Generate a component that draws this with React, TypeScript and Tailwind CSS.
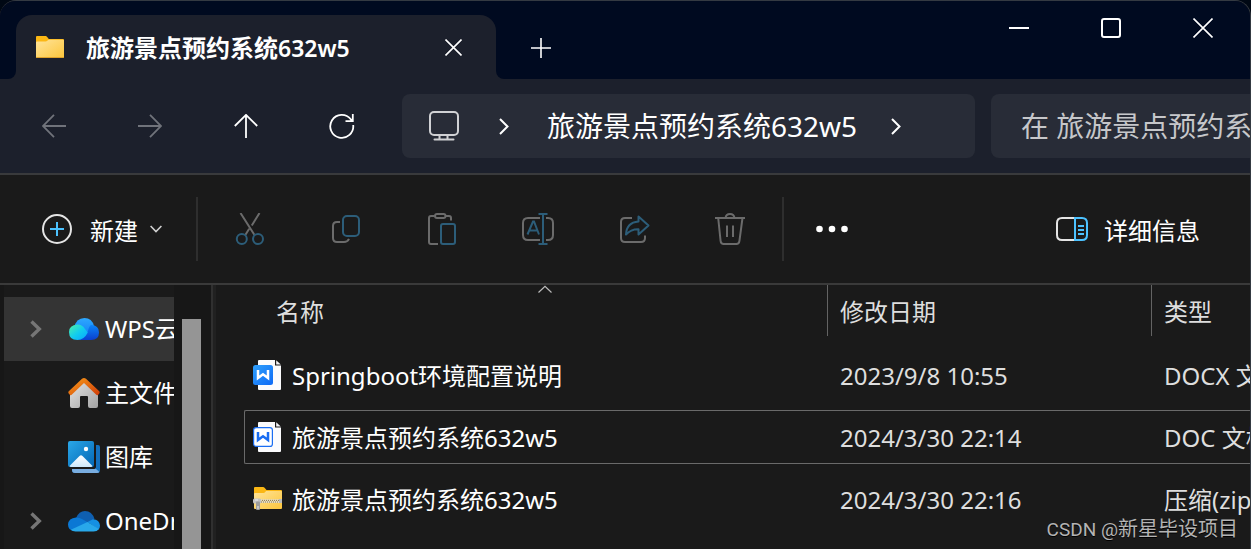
import type { ReactNode } from 'react';

type IconProps = { className?: string };

function FolderIcon() {
  return (
    <svg width="28" height="22" viewBox="0 0 28 22" aria-hidden="true">
      <defs>
        <linearGradient id="folder" x1="0" y1="0" x2="1" y2="1">
          <stop offset="0" stopColor="#ffe49a" />
          <stop offset="1" stopColor="#fcc63c" />
        </linearGradient>
      </defs>
      <path d="M0 1Q0 0 1 0H9.500Q10.500 0 11.200 .9L12.800 3H27Q28 3 28 4V12H0Z" fill="#fbb714" />
      <path d="M0 6.500Q0 5.500 1 5.500H9.500Q10.600 5.500 11.400 4.700L12 4Q12.500 3.700 13.200 3.700H27Q28 3.700 28 4.700V21Q28 22 27 22H1Q0 22 0 21Z" fill="url(#folder)" />
      <path d="M0 21H28Q28 22 27 22H1Q0 22 0 21Z" fill="#dfa22b" />
    </svg>
  );
}

function Cross({ size, stroke }: { size: number; stroke: number }) {
  return (
    <svg width={size} height={size} viewBox={`0 0 ${size} ${size}`} fill="none" stroke="#fff" strokeWidth={stroke} aria-hidden="true">
      <path d={`M.5 .5L${size - 0.5} ${size - 0.5}M${size - 0.5} .5L.5 ${size - 0.5}`} />
    </svg>
  );
}

function ArrowIcon({ className }: IconProps) {
  return (
    <svg width="24" height="24" viewBox="0 0 24 24" fill="none" strokeWidth="1.800" stroke="currentColor" className={className} aria-hidden="true">
      <path d="M12 .8L.9 12L12 23.200M.9 12H24" />
    </svg>
  );
}

function RefreshIcon() {
  return (
    <svg width="26" height="26" viewBox="0 0 26 26" fill="none" stroke="#fff" strokeWidth="1.800" aria-hidden="true">
      <path d="M24.200 12A11.500 11.500 0 1 1 21.800 6.200L23 7.900M23.800 1V8.100H16.500" />
    </svg>
  );
}

function ChevronRight({ className }: IconProps) {
  return (
    <svg width="10" height="17" viewBox="0 0 10 17" fill="none" stroke="#fff" strokeWidth="2" className={className} aria-hidden="true">
      <path d="M1 1L8.500 8.500L1 16" />
    </svg>
  );
}

function TreeChevron({ className }: IconProps) {
  return (
    <svg width="12" height="18" viewBox="0 0 12 18" fill="none" stroke="currentColor" strokeWidth="3.400" className={className} aria-hidden="true">
      <path d="M1.500 1.500L9.300 9L1.500 16.500" />
    </svg>
  );
}

function MonitorIcon() {
  return (
    <svg width="30" height="30" viewBox="0 0 30 30" fill="none" stroke="#d0d1d4" strokeWidth="2" aria-hidden="true">
      <rect x="1" y="1" width="28" height="23" rx="4" />
      <path d="M10.500 24V28M18.500 24V28" />
      <path d="M5.500 28.600H24.500" strokeLinecap="round" />
    </svg>
  );
}

function NewIcon() {
  return (
    <svg width="30" height="30" viewBox="0 0 30 30" fill="none" strokeWidth="2" aria-hidden="true">
      <circle cx="15" cy="15" r="14" stroke="#e4e4e4" />
      <path d="M15 8V22M8 15H22" stroke="#4cc2ff" />
    </svg>
  );
}

function CutIcon() {
  return (
    <svg width="32" height="32" viewBox="0 0 32 32" fill="none" strokeWidth="2" aria-hidden="true">
      <path d="M6.500 0L20.500 22M25.500 0L17.800 12.500M15.200 15.800L11.300 22" stroke="#6b6b6b" />
      <circle cx="7.800" cy="26" r="5" stroke="#2c5d79" />
      <circle cx="24" cy="26" r="5" stroke="#2c5d79" />
    </svg>
  );
}

function CopyIcon() {
  return (
    <svg width="32" height="32" viewBox="0 0 32 32" fill="none" strokeWidth="2" aria-hidden="true">
      <path d="M10 9H7Q3 9 3 13V25Q3 29 7 29H14Q17.500 29 19 25.800" stroke="#6b6b6b" />
      <rect x="13" y="3" width="16" height="20" rx="4" stroke="#2c5d79" />
    </svg>
  );
}

function PasteIcon() {
  return (
    <svg width="32" height="32" viewBox="0 0 32 32" fill="none" strokeWidth="2" aria-hidden="true">
      <path d="M8.800 3H5Q3 3 3 5V29Q3 31 5 31H12M20 3H23Q25 3 25 5V7.500" stroke="#6b6b6b" />
      <rect x="9" y="1" width="10.500" height="4" rx="2" stroke="#6b6b6b" />
      <rect x="15" y="11" width="14" height="20" rx="2" stroke="#2c5d79" />
    </svg>
  );
}

function RenameIcon() {
  return (
    <svg width="32" height="32" viewBox="0 0 32 32" fill="none" strokeWidth="2" aria-hidden="true">
      <path d="M18 5H6Q1 5 1 10V22Q1 27 6 27H18M24 5H26Q31 5 31 10V22Q31 27 26 27H24" stroke="#6b6b6b" />
      <path d="M5.500 21.500L11 8.500H12L17 21.500M7.300 17.500H15.500M21 1V31M16.500 1H25.500M16.500 31H25.500" stroke="#2c5d79" />
    </svg>
  );
}

function ShareIcon() {
  return (
    <svg width="32" height="32" viewBox="0 0 32 32" fill="none" strokeWidth="2" aria-hidden="true">
      <path d="M14 5H7Q3 5 3 9V25Q3 29 7 29H23Q27 29 27 25V22.500" stroke="#6b6b6b" />
      <path d="M20.500 3.500L30.500 12.500L20.500 21.500V16.200Q13 16 8 21.500Q8.500 9.500 20.500 8.500Z" stroke="#2c5d79" strokeLinejoin="round" />
    </svg>
  );
}

function DeleteIcon() {
  return (
    <svg width="32" height="32" viewBox="0 0 32 32" fill="none" stroke="#6b6b6b" strokeWidth="2" aria-hidden="true">
      <path d="M1 5H31M11.500 5Q12 1 16 1T20.500 5M4.200 5L6.600 28Q6.900 31 9.700 31H22.300Q25.100 31 25.400 28L28.500 5M13 12.500V24M19 12.500V24" />
    </svg>
  );
}

function MoreIcon() {
  return (
    <svg width="32" height="8" viewBox="0 0 32 8" fill="#fff" aria-hidden="true">
      <circle cx="3.500" cy="4" r="3.300" />
      <circle cx="16" cy="4" r="3.300" />
      <circle cx="28.500" cy="4" r="3.300" />
    </svg>
  );
}

function DetailsIcon() {
  return (
    <svg width="32" height="24" viewBox="0 0 32 24" fill="none" strokeWidth="2" aria-hidden="true">
      <path d="M18 1H6Q1 1 1 6V18Q1 23 6 23H18" stroke="#e4e4e4" />
      <path d="M19 1H26Q31 1 31 6V18Q31 23 26 23H19ZM22 9H28M22 13H28M22 17H28" stroke="#4cc2ff" />
    </svg>
  );
}

function WpsCloudIcon() {
  return (
    <svg width="32" height="32" viewBox="0 0 32 32" aria-hidden="true">
      <defs>
        <linearGradient id="wpsTop" x1="0" y1="0" x2="0" y2="1">
          <stop offset="0" stopColor="#2ea8ff" />
          <stop offset="1" stopColor="#1180f5" />
        </linearGradient>
        <linearGradient id="wpsRight" x1="0" y1="0" x2="0" y2="1">
          <stop offset="0" stopColor="#0b84f8" />
          <stop offset="1" stopColor="#0a3fd0" />
        </linearGradient>
        <linearGradient id="wpsLeft" x1="0" y1="0" x2="1" y2="1">
          <stop offset="0" stopColor="#4ff0a4" />
          <stop offset=".5" stopColor="#12cdee" />
          <stop offset="1" stopColor="#08a4ff" />
        </linearGradient>
      </defs>
      <path d="M6 15Q8 5 16.500 5Q24 5 26 13L20 23H10Z" fill="url(#wpsTop)" />
      <path d="M23 12Q31 12 31 19.500Q31 27 23 27H9Q16 26 20 18Q21 13 23 12Z" fill="url(#wpsRight)" />
      <path d="M9.500 11.500Q14.500 11.500 17 16L19.800 19.500Q16 27 9.500 27Q1 27 1 19Q1 12 9.500 11.500Z" fill="url(#wpsLeft)" />
    </svg>
  );
}

function HomeIcon() {
  return (
    <svg width="32" height="32" viewBox="0 0 32 32" aria-hidden="true">
      <defs>
        <linearGradient id="homeWall" x1="0" y1="0" x2="1" y2="1">
          <stop offset="0" stopColor="#e6e6e6" />
          <stop offset="1" stopColor="#a2a2a2" />
        </linearGradient>
        <linearGradient id="homeRoof" x1="0" y1="0" x2="1" y2="1">
          <stop offset="0" stopColor="#f9a01b" />
          <stop offset="1" stopColor="#cf3b08" />
        </linearGradient>
      </defs>
      <path d="M2 14L16 3L30 14V29Q30 31 28 31H22Q20 31 20 29V20Q20 19 19 19H13Q12 19 12 20V29Q12 31 10 31H4Q2 31 2 29Z" fill="url(#homeWall)" />
      <path d="M14 1.800Q16 0 18 1.800L31.500 14.500Q32 15.500 31.300 16.500L30 18Q29 18.500 28.300 17.800L16 6L3.700 17.800Q3 18.500 2 18L.7 16.500Q0 15.500 .5 14.500Z" fill="url(#homeRoof)" />
    </svg>
  );
}

function GalleryIcon() {
  return (
    <svg width="32" height="32" viewBox="0 0 32 32" aria-hidden="true">
      <defs>
        <linearGradient id="photo" x1="0" y1="0" x2="1" y2="1">
          <stop offset="0" stopColor="#2aa7e8" />
          <stop offset="1" stopColor="#0467b5" />
        </linearGradient>
        <linearGradient id="hill" x1="0" y1="0" x2="0" y2="1">
          <stop offset="0" stopColor="#fff" />
          <stop offset="1" stopColor="#cde8fb" />
        </linearGradient>
      </defs>
      <path d="M28 4H30Q32 4 32 6V29Q32 32 29 32H7Q4 32 4 29V28H26Q28 28 28 26Z" fill="#1470bd" />
      <path d="M4 28H26Q27 28 27.500 27.500L31.400 31Q30.500 32 29 32H7Q4 32 4 29Z" fill="#79ade0" />
      <rect width="26" height="26" rx="2" fill="url(#photo)" />
      <path d="M1.500 25L11.500 15Q13 13.500 14.500 15L24.500 25Q24 26 23 26H3Q2 26 1.500 25Z" fill="url(#hill)" />
      <circle cx="18" cy="8" r="2.200" fill="#fff" />
    </svg>
  );
}

function OneDriveIcon() {
  return (
    <svg width="32" height="32" viewBox="0 0 32 32" aria-hidden="true">
      <path d="M8 13Q11 6 17 6Q24 6 26.500 14L18 20Z" fill="#0f5fb0" />
      <path d="M8 12.500Q12 12.500 14.500 14.200L20 17.500L6 26Q0 25 0 19.500Q.5 13 8 12.500Z" fill="#0b78d4" />
      <path d="M19.500 17L25 14.200Q31.500 14.500 32 20.500Q32 23 30.500 24.500Z" fill="#1590e2" />
      <path d="M19.500 17L31 24Q29 26.500 25.500 26.500H7.500Q4.500 26.500 2.800 24.800Z" fill="#28a8ea" />
    </svg>
  );
}

function WordIcon({ filled }: { filled: boolean }) {
  return (
    <svg width="30" height="32" viewBox="0 0 30 32" aria-hidden="true">
      <defs>
        <linearGradient id="docBadge" x1="0" y1="0" x2="1" y2="1">
          <stop offset="0" stopColor="#2fa0fb" />
          <stop offset="1" stopColor="#0f6af6" />
        </linearGradient>
      </defs>
      <path d="M6 1H22V6.500H28V30Q28 31 27 31H6Q5 31 5 30V2Q5 1 6 1Z" fill="#fbfbfd" />
      <path d="M23.200 1.200L27.800 5.500H23.200Z" fill="#f4f4f8" />
      {filled ? (
        <rect y="6" width="20" height="20" rx="2.500" fill="url(#docBadge)" />
      ) : (
        <rect x=".6" y="6.600" width="18.800" height="18.800" rx="2.500" fill="#fff" stroke="#1a6df2" strokeWidth="1.200" />
      )}
      <path d="M5 11V19L10 15.300L15 19V11" fill="none" stroke={filled ? '#fff' : '#1a6df2'} strokeWidth="2.500" />
    </svg>
  );
}

function ZipIcon() {
  return (
    <svg width="30" height="32" viewBox="0 0 30 32" aria-hidden="true">
      <path d="M1 5Q1 4 2 4H10Q11 4 11.800 5L13.500 7H28Q29 7 29 8V14H1Z" fill="#fbb714" />
      <path d="M1 11Q1 10 2 10H10.500Q11.500 10 12.300 9L13 8H28Q29 8 29 9V25Q29 26 28 26H2Q1 26 1 25Z" fill="url(#folder)" />
      <path d="M6 16.300H29V20H6Z" fill="#e6dcc0" />
      <path d="M7 17.400H26M8 19H26" stroke="#8c7a48" strokeWidth="1" strokeDasharray="1 1" />
      <path d="M26 16H29V20H26Z" fill="#b9b9b9" />
      <rect y="15.500" width="8" height="5" rx="1.500" fill="#c3c3c3" />
      <rect x="3" y="18.500" width="4" height="8.500" rx="1" fill="#9d9d9d" />
      <path d="M5 23V26M2 17H5" stroke="#eee" strokeWidth="1" />
    </svg>
  );
}

const tools: { label: string; icon: ReactNode }[] = [
  { label: '剪切', icon: <CutIcon /> },
  { label: '复制', icon: <CopyIcon /> },
  { label: '粘贴', icon: <PasteIcon /> },
  { label: '重命名', icon: <RenameIcon /> },
  { label: '共享', icon: <ShareIcon /> },
  { label: '删除', icon: <DeleteIcon /> },
];

const places: { name: string; icon: ReactNode; expandable: boolean; active: boolean }[] = [
  { name: 'WPS云盘', icon: <WpsCloudIcon />, expandable: true, active: true },
  { name: '主文件夹', icon: <HomeIcon />, expandable: false, active: false },
  { name: '图库', icon: <GalleryIcon />, expandable: false, active: false },
  { name: 'OneDrive', icon: <OneDriveIcon />, expandable: true, active: false },
];

const files: { name: string; date: string; type: string; icon: ReactNode; focused: boolean }[] = [
  { name: 'Springboot环境配置说明', date: '2023/9/8 10:55', type: 'DOCX 文档', icon: <WordIcon filled />, focused: false },
  { name: '旅游景点预约系统632w5', date: '2024/3/30 22:14', type: 'DOC 文档', icon: <WordIcon filled={false} />, focused: true },
  { name: '旅游景点预约系统632w5', date: '2024/3/30 22:16', type: '压缩(zipped)文件夹', icon: <ZipIcon />, focused: false },
];

function TitleBar() {
  return (
    <header className="flex h-[78px] shrink-0 bg-[#1c202c]">
      <div className="w-4 rounded-br-lg bg-[#000a20]" />
      <div className="flex bg-linear-to-b from-[#000a20] from-50% to-[#1c202c] to-50% pt-[14px]">
        <div className="flex w-[480px] items-center rounded-t-2xl bg-[#1c202c] pr-[34px] pl-5">
          <FolderIcon />
          <h1 className="ml-[22px] flex-1 pt-0.5 text-2xl font-bold whitespace-nowrap text-white">
            旅游景点预约系统<span className="text-[23px] font-semibold">632w5</span>
          </h1>
          <button type="button" aria-label="关闭标签页">
            <Cross size={17} stroke={1.6} />
          </button>
        </div>
      </div>
      <div className="flex flex-1 items-start justify-between rounded-bl-lg bg-[#000a20]">
        <button type="button" aria-label="新建标签页" className="flex h-[94px] w-[90px] items-center justify-center">
          <svg width="20" height="20" viewBox="0 0 20 20" stroke="#fff" strokeWidth="1.600" aria-hidden="true">
            <path d="M10 0V20M0 10H20" />
          </svg>
        </button>
        <div className="flex pr-px">
          <button type="button" aria-label="最小化" className="flex h-[54px] w-[92px] items-center justify-center">
            <svg width="20" height="20" viewBox="0 0 20 20" stroke="#fff" strokeWidth="2" aria-hidden="true">
              <path d="M0 10H20" />
            </svg>
          </button>
          <button type="button" aria-label="最大化" className="flex h-[54px] w-[92px] items-center justify-center">
            <svg width="20" height="20" viewBox="0 0 20 20" fill="none" stroke="#fff" strokeWidth="2" aria-hidden="true">
              <rect x="1" y="1" width="18" height="18" rx="2" />
            </svg>
          </button>
          <button type="button" aria-label="关闭" className="flex h-[54px] w-[92px] items-center justify-center">
            <Cross size={20} stroke={1.6} />
          </button>
        </div>
      </div>
    </header>
  );
}

function NavigationBar() {
  return (
    <div className="flex h-24 shrink-0 items-center border-b-2 border-[#393a3c] bg-[#1c202c] pl-[6px]">
      <nav aria-label="导航" className="flex">
        <button type="button" disabled aria-label="后退" className="flex h-16 w-24 items-center justify-center text-[#70737b]">
          <ArrowIcon />
        </button>
        <button type="button" disabled aria-label="前进" className="flex h-16 w-24 items-center justify-center text-[#70737b]">
          <ArrowIcon className="rotate-180" />
        </button>
        <button type="button" aria-label="向上" className="flex h-16 w-24 items-center justify-center text-white">
          <ArrowIcon className="rotate-90" />
        </button>
        <button type="button" aria-label="刷新" className="flex h-16 w-24 items-center justify-center">
          <RefreshIcon />
        </button>
      </nav>
      <div className="ml-3 flex h-16 min-w-0 flex-1 items-center rounded-lg bg-[#282c37] pl-[27px]">
        <MonitorIcon />
        <ChevronRight className="ml-10" />
        <button type="button" className="ml-[38px] text-[28px] whitespace-nowrap text-white">
          旅游景点预约系统632w5
        </button>
        <ChevronRight className="ml-[34px]" />
      </div>
      <input
        type="text"
        aria-label="搜索"
        placeholder="在 旅游景点预约系统632w5 中搜索"
        className="ml-4 h-16 w-[259px] rounded-l-lg bg-[#282c37] pl-[30px] text-[28px] text-white outline-none placeholder:text-[#c6c7ca]"
      />
    </div>
  );
}

function CommandBar() {
  return (
    <div role="toolbar" aria-label="命令" className="flex h-[110px] shrink-0 items-center border-b-2 border-[#3a3a3a]">
      <button type="button" className="flex h-16 items-center pr-[34px] pl-[42px] text-2xl text-white">
        <NewIcon />
        <span className="ml-[18px] pt-1">新建</span>
        <svg width="12" height="8" viewBox="0 0 12 8" fill="none" stroke="#d0d0d0" strokeWidth="1.600" className="ml-3" aria-hidden="true">
          <path d="M.6 1L6 6.600L11.400 1" />
        </svg>
      </button>
      <div className="mr-1 h-16 w-[2px] bg-[#2e2e2e]" />
      {tools.map((tool) => (
        <button key={tool.label} type="button" disabled aria-label={tool.label} className="flex h-16 w-24 items-center justify-center">
          {tool.icon}
        </button>
      ))}
      <div className="ml-1 h-16 w-[2px] bg-[#2e2e2e]" />
      <button type="button" aria-label="更多" className="flex h-16 w-24 items-center justify-center">
        <MoreIcon />
      </button>
      <button type="button" className="mr-[50px] ml-auto flex h-16 items-center gap-4 text-2xl text-white">
        <DetailsIcon />
        <span className="pt-1">详细信息</span>
      </button>
    </div>
  );
}

function Sidebar() {
  return (
    <aside className="flex w-[216px] shrink-0 border-r-[3px] border-[#212121] bg-[#171717]">
      <nav aria-label="位置" className="ml-1 w-[170px] overflow-hidden bg-[#1a1a1a] pt-3">
        <ul>
          {places.map((place) => (
            <li key={place.name}>
              <a
                href="#"
                className={
                  place.active
                    ? 'flex h-16 items-center bg-[#343434] pl-[26px] text-2xl whitespace-nowrap text-white'
                    : 'flex h-16 items-center pl-[26px] text-2xl whitespace-nowrap text-white'
                }
              >
                <span className="w-[38px] shrink-0 text-[#767676]">{place.expandable && <TreeChevron />}</span>
                <span className="shrink-0">{place.icon}</span>
                <span className="ml-[5px]">{place.name}</span>
              </a>
            </li>
          ))}
        </ul>
      </nav>
      <div className="ml-2 flex w-[19px] pt-[34px]">
        <div className="flex-1 bg-[#959595]" />
      </div>
      <div className="ml-auto w-[2px] bg-[#303030]" />
    </aside>
  );
}

function FileList() {
  return (
    <main className="min-w-0 flex-1 overflow-hidden pl-7">
      <table className="w-full table-fixed border-collapse text-left text-2xl whitespace-nowrap text-[#dedede]">
        <colgroup>
          <col className="w-[583px]" />
          <col className="w-[324px]" />
          <col />
        </colgroup>
        <thead>
          <tr className="h-[59px]">
            <th scope="col" className="p-0 align-top font-normal">
              <div className="relative flex h-[51px] items-center pt-0.5 pl-8">
                名称
                <svg width="14" height="8" viewBox="0 0 14 8" fill="none" stroke="#bdbdbd" strokeWidth="1.200" className="absolute top-0 left-[294px]" aria-hidden="true">
                  <path d="M.5 7.500L7 1.300L13.500 7.500" />
                </svg>
              </div>
            </th>
            <th scope="col" className="p-0 align-top font-normal">
              <div className="flex h-[51px] items-center border-l border-[#636363] pt-0.5 pl-3">修改日期</div>
            </th>
            <th scope="col" className="p-0 align-top font-normal">
              <div className="flex h-[51px] items-center border-l border-[#636363] pt-0.5 pl-3">类型</div>
            </th>
          </tr>
        </thead>
        <tbody>
          {files.map((file) => {
            const edge = file.focused ? 'border-[#6a6a6a]' : 'border-transparent';
            return (
              <tr key={file.date} className="h-[62px]">
                <td className="p-0">
                  <div className={`flex h-[54px] items-center rounded-l-xs border-y border-l pl-2 text-white ${edge}`}>
                    {file.icon}
                    <span className="ml-[9px] pt-0.5">{file.name}</span>
                  </div>
                </td>
                <td className="p-0">
                  <div className={`flex h-[54px] items-center border-y pt-0.5 pl-[13px] ${edge}`}>{file.date}</div>
                </td>
                <td className="p-0">
                  <div className={`flex h-[54px] items-center overflow-hidden border-y pt-0.5 pl-[13px] ${edge}`}>{file.type}</div>
                </td>
              </tr>
            );
          })}
        </tbody>
      </table>
    </main>
  );
}

export default function App() {
  return (
    <div className="h-screen bg-[#000814] font-['Noto_Sans','Noto_Sans_CJK_SC',sans-serif]">
      <div className="relative flex h-full flex-col overflow-hidden rounded-t-2xl border-t border-r border-[#343a42] bg-[#1a1a1a]">
        <TitleBar />
        <NavigationBar />
        <CommandBar />
        <div className="flex min-h-0 flex-1">
          <Sidebar />
          <FileList />
        </div>
        <p className="absolute right-3 bottom-[5px] font-['Roboto','Noto_Sans_CJK_SC',sans-serif] text-xl text-[#b4b4b4] text-shadow-2xs text-shadow-black">
          <span className="text-[19px]">CSDN @</span>新星毕设项目
        </p>
      </div>
    </div>
  );
}
